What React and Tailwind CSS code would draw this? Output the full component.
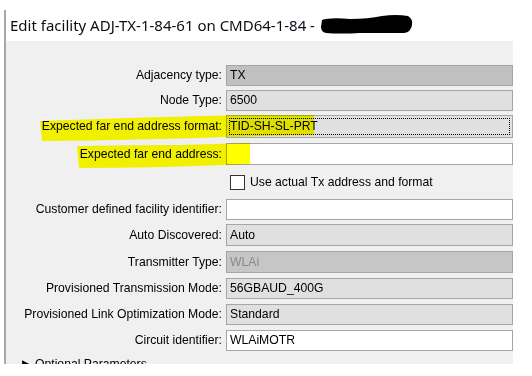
import React from 'react';

// one entry per form row; mt/h are the vertical rhythm measured off the dialog
const rows = [
  { label: 'Adjacency type:', value: 'TX', mt: 'mt-[24px]', h: 'h-[21px]', field: 'bg-[#c0c0c0] text-black' },
  { label: 'Node Type:', value: '6500', mt: 'mt-[4px]', h: 'h-[21px]', field: 'bg-[#e0e0e0] text-black' },
  { label: 'Expected far end address format:', value: 'TID-SH-SL-PRT', mt: 'mt-[4px]', h: 'h-[23px]', field: 'bg-[#e0e0e0] text-black', focus: true },
  { label: 'Expected far end address:', value: '', mt: 'mt-[5px]', h: 'h-[22px]', field: 'bg-white text-black' },
  { check: 'Use actual Tx address and format', mt: 'mt-[10px]', h: 'h-[15px]' },
  { label: 'Customer defined facility identifier:', value: '', mt: 'mt-[9px]', h: 'h-[21px]', field: 'bg-white text-black' },
  { label: 'Auto Discovered:', value: 'Auto', mt: 'mt-[4px]', h: 'h-[22px]', field: 'bg-[#e0e0e0] text-black' },
  { label: 'Transmitter Type:', value: 'WLAi', mt: 'mt-[5px]', h: 'h-[22px]', field: 'bg-[#c6c6c6] text-[#8a8a8a]' },
  { label: 'Provisioned Transmission Mode:', value: '56GBAUD_400G', mt: 'mt-[5px]', h: 'h-[21px]', field: 'bg-[#e0e0e0] text-black' },
  { label: 'Provisioned Link Optimization Mode:', value: 'Standard', mt: 'mt-[5px]', h: 'h-[21px]', field: 'bg-[#e0e0e0] text-black' },
  { label: 'Circuit identifier:', value: 'WLAiMOTR', mt: 'mt-[5px]', h: 'h-[21px]', field: 'bg-white text-black' },
];

function Row({ r }) {
  if (r.check) {
    return (
      <div className={`${r.mt} ${r.h} grid grid-cols-[216px_1fr] gap-x-[4px]`}>
        <div />
        <div className="flex items-center pl-[4px] gap-[5px]">
          <span className="w-[15px] h-[15px] border border-[#333] bg-white shrink-0" />
          <span className="text-[12.2px] text-black leading-none">{r.check}</span>
        </div>
      </div>
    );
  }
  return (
    <div className={`${r.mt} ${r.h} grid grid-cols-[216px_1fr] gap-x-[4px]`}>
      <div className="flex items-center justify-end text-[12.2px] text-black whitespace-nowrap">{r.label}</div>
      <div className={`relative flex items-center border border-[#a6a6a6] pl-[3px] text-[12.2px] ${r.field}`}>
        {r.focus && <span className="absolute inset-[2px] border border-dotted border-black" />}
        <span className="relative">{r.value}</span>
      </div>
    </div>
  );
}

export default function App() {
  return (
    <div className="relative w-[532px] h-[376px] bg-white overflow-hidden" style={{ fontFamily: '"Liberation Sans", Arial, sans-serif' }}>
      <div className="ml-[4px] mt-[10px] h-[354px] border-l-2 border-[#a8a8a8] flex flex-col">
        <div className="h-[31px] pl-[4px] flex items-center gap-[5px]">
          <span className="text-[15px] text-[#0c0c14] whitespace-nowrap" style={{ fontFamily: '"Noto Sans", "Open Sans", sans-serif' }}>
            Edit facility ADJ-TX-1-84-61 on CMD64-1-84 -
          </span>
          {/* redaction scribble */}
          <svg width="94" height="22" viewBox="0 0 94 22" className="shrink-0 -mt-[4px]">
            <path d="M2 7 Q10 4 30 6 Q48 6 62 3 Q76 1 88 3 Q93 6 92 12 Q91 19 84 20 L40 20 Q20 21 6 20 Q1 19 1 14 Z" fill="#000" />
          </svg>
        </div>
        <div className="flex-1 w-[507px] bg-[#f0f0f0] overflow-hidden">
          {rows.map((r, i) => <Row key={i} r={r} />)}
          <div className="mt-[4px] flex items-center pl-[16px] gap-[6px] text-[12.2px] text-black">
            <span className="text-[9px]">▶</span>
            <span>Optional Parameters</span>
          </div>
        </div>
      </div>

      {/* marker highlights drawn over the screenshot */}
      <svg className="absolute inset-0 pointer-events-none mix-blend-multiply" width="532" height="376">
        <path d="M40 121 Q120 118 200 116 L260 115 L314 115 L314 135 L226 137 Q140 140 42 141 Z" fill="#ffff00" />
        <path d="M77 146 Q130 145 180 145 L250 143 L250 164 L226 165 Q150 168 79 168 Z" fill="#ffff00" />
      </svg>
    </div>
  );
}
